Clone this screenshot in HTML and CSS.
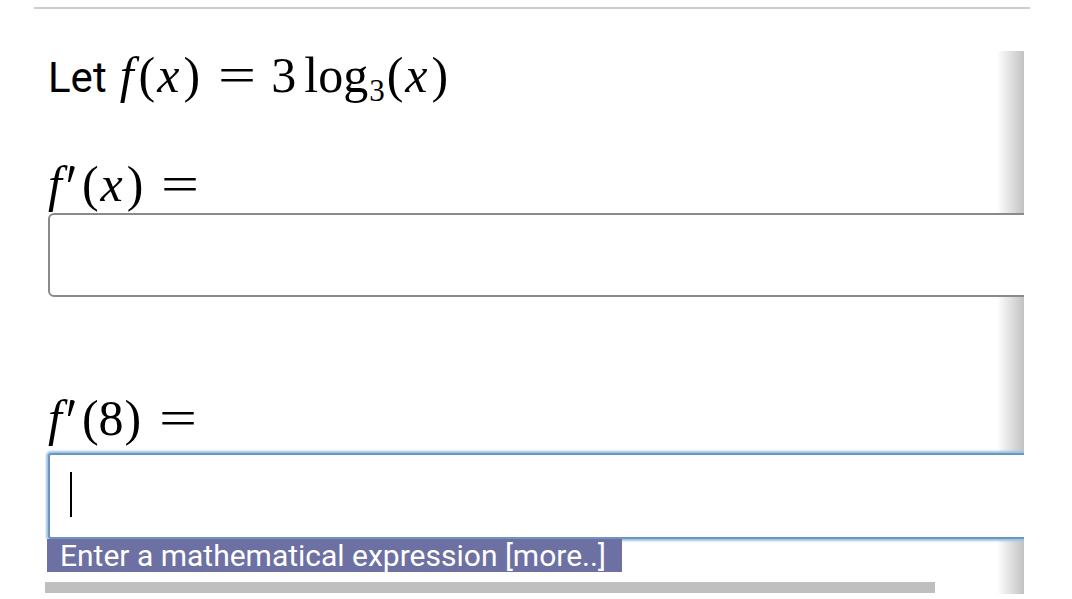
FILE: index.html
```html
<!DOCTYPE html>
<html>
<head>
<meta charset="utf-8">
<link rel="stylesheet" href="styles.css">
</head>
<body>
<div class="page">
  <div class="rule"></div>
  <div class="content">
    <div class="line let"><span class="txt">Let</span><span class="math"><i class="fn">f</i><span class="lp">(</span><i class="var">x</i><span class="rp">)</span><span class="rel">=</span><span class="num">3</span><span class="op">log</span><sub>3</sub><span class="lp2">(</span><i class="var">x</i><span class="rp">)</span></span></div>
    <div class="line lbl1"><span class="math"><i class="fn">f</i><span class="prime"></span><span class="lp">(</span><i class="var">x</i><span class="rp">)</span><span class="rel">=</span></span></div>
    <div class="answer"></div>
    <div class="line lbl2"><span class="math"><i class="fn">f</i><span class="prime"></span><span class="lp">(</span><span class="num">8</span><span class="rp">)</span><span class="rel">=</span></span></div>
    <div class="answer focused"><span class="caret"></span></div>
    <div class="tip">Enter a mathematical expression [more..]</div>
    <div class="bar"></div>
  </div>
</div>
</body>
</html>
```

FILE: styles.css
```css
html, body {
  margin: 0;
  padding: 0;
  background: #fff;
}
.page {
  width: 1072px;
  height: 599px;
  overflow: hidden;
  font-family: Roboto, "Liberation Sans", sans-serif;
}
.rule {
  margin: 7px 0 0 34px;
  width: 996px;
  height: 2px;
  background: #cccccc;
}
.content {
  margin: 38px 0 0 45px;
  width: 979px;
  height: 547px;
  padding-left: 3px;
  box-sizing: border-box;
  overflow: hidden;
  background: linear-gradient(to right, #ffffff, #c2c2c2) right 0 top 4px / 27px 100% no-repeat;
}
.line {
  height: 56px;
  line-height: 56px;
  white-space: nowrap;
  color: #000;
}
.txt {
  font-size: 42px;
}
.math {
  font-family: "Liberation Serif", "Times New Roman", serif;
  font-size: 50px;
}
.let .math {
  margin-left: 13px;
}
.math i {
  font-style: italic;
}
.lp {
  margin-left: 5px;
}
.lp2 {
  margin-left: 2px;
}
.var {
  padding: 0 3px 0 2px;
}
.rp {
  margin-left: 1px;
}
.rel {
  display: inline-block;
  transform: scaleX(1.35);
  margin: 0 20px 0 23px;
}
.op {
  margin-left: 8px;
}
.math sub {
  font-size: 31px;
  vertical-align: -9px;
  line-height: 0;
  margin-left: 1px;
}
.prime {
  display: inline-block;
  width: 7px;
  height: 16px;
  margin-left: 6px;
  margin-right: 2px;
  vertical-align: 19px;
  background: #000;
  clip-path: polygon(35% 0, 100% 0, 100% 8%, 30% 100%, 0 100%);
  border-radius: 3px 3px 0 0;
}
.lbl1 {
  margin-top: 53px;
}
.lbl2 {
  margin-top: 93px;
}
.answer {
  margin-top: 1px;
  width: 1000px;
  height: 84px;
  box-sizing: border-box;
  border: 2px solid #8a8a8a;
  border-radius: 6px;
  background: #fff;
}
.answer.focused {
  margin-top: 7px;
  height: 86px;
  border-color: #6e94c2;
  border-radius: 3px;
  box-shadow: 0 0 2px 2px #9cc4e8;
  padding: 17px 0 0 20px;
}
.caret {
  display: block;
  width: 2px;
  height: 45px;
  background: #000;
}
.tip {
  width: 575px;
  height: 33px;
  margin-left: -1px;
  box-sizing: border-box;
  padding-left: 13px;
  background: #6d70a3;
  color: #fff;
  font-size: 30px;
  line-height: 33px;
  white-space: nowrap;
}
.bar {
  margin: 10px 0 0 -3px;
  width: 890px;
  height: 11px;
  background: #bfbfbf;
}
```
